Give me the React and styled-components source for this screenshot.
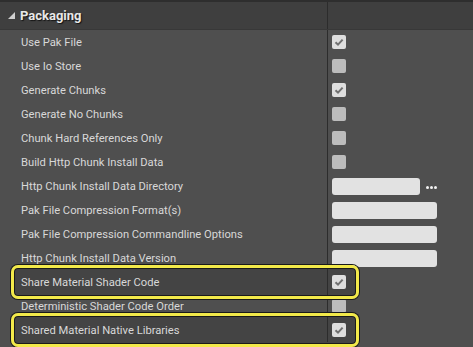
import React from "react";
import styled, { createGlobalStyle } from "styled-components";

const Global = createGlobalStyle`
  html, body {
    margin: 0;
    padding: 0;
    background: #4f4f4f;
    font-family: Roboto, "Liberation Sans", sans-serif;
  }
`;

const rows = [
  { label: "Use Pak File", kind: "check", checked: true },
  { label: "Use Io Store", kind: "check" },
  { label: "Generate Chunks", kind: "check", checked: true },
  { label: "Generate No Chunks", kind: "check" },
  { label: "Chunk Hard References Only", kind: "check" },
  { label: "Build Http Chunk Install Data", kind: "check" },
  { label: "Http Chunk Install Data Directory", kind: "path" },
  { label: "Pak File Compression Format(s)", kind: "text" },
  { label: "Pak File Compression Commandline Options", kind: "text" },
  { label: "Http Chunk Install Data Version", kind: "text" },
  { label: "Share Material Shader Code", kind: "check", checked: true, marked: true },
  { label: "Deterministic Shader Code Order", kind: "check" },
  { label: "Shared Material Native Libraries", kind: "check", checked: true, marked: true },
];

const Panel = styled.div`
  width: 473px;
  height: 347px;
  overflow: hidden;
  background: #4f4f4f;
  border-top: 2px solid #2e2e2e;
  box-sizing: border-box;
`;

const Header = styled.div`
  display: grid;
  grid-template-columns: 328px 1fr;
  height: 28px;
  background: #3f3f3f;
  border-bottom: 1px solid #383838;
  box-sizing: border-box;
`;

const HeaderTitle = styled.div`
  display: flex;
  align-items: center;
  gap: 5px;
  padding-left: 8px;
  border-right: 1px solid #2c2c2c;
  color: #e8e8e8;
  font-size: 13px;
  font-weight: 700;
  text-shadow: 1px 1px 1px #141414;
`;

const Row = styled.div`
  position: relative;
  display: grid;
  grid-template-columns: 328px 1fr;
  height: 24px;

  ${(p) =>
    p.$marked &&
    `
    &::before {
      content: "";
      position: absolute;
      left: 13px;
      top: -2px;
      width: 344px;
      height: 28px;
      background: #444;
      border-radius: 4px;
      z-index: 0;
    }
    &::after {
      content: "";
      position: absolute;
      left: 11px;
      top: -5px;
      width: 342px;
      height: 28px;
      border: 3px solid #f2e94a;
      border-radius: 7px;
      box-shadow: 0 0 0 1px #1a1a1a, inset 0 0 0 1px #1a1a1a;
      pointer-events: none;
      z-index: 2;
    }
  `}
`;

const Name = styled.div`
  position: relative;
  z-index: 1;
  display: flex;
  align-items: center;
  padding-left: 21px;
  border-right: 1px solid #2c2c2c;
  color: #d8d8d8;
  font-size: 11.2px;
  white-space: nowrap;
`;

const Value = styled.div`
  position: relative;
  z-index: 1;
  display: flex;
  align-items: center;
  gap: 6px;
  padding-left: 4px;
`;

const Box = styled.div`
  width: 14px;
  height: 14px;
  border-radius: 2px;
  background: ${(p) => (p.$checked ? "#dedede" : "#bcbcbc")};
  display: flex;
  align-items: center;
  justify-content: center;
`;

const Field = styled.div`
  width: ${(p) => p.$w}px;
  height: 17px;
  border-radius: 3px;
  background: #e2e2e2;
`;

const Dots = styled.div`
  display: flex;
  gap: 1px;
  padding-top: 3px;
  span {
    width: 3px;
    height: 3px;
    border-radius: 50%;
    background: #f2f2f2;
  }
`;

const Check = () => (
  <svg width="10" height="10" viewBox="0 0 10 10">
    <polyline
      points="1.5,5.2 4,7.6 8.6,2.6"
      fill="none"
      stroke="#707070"
      strokeWidth="2"
    />
  </svg>
);

const renderValue = (r) => {
  if (r.kind === "check")
    return <Box $checked={r.checked}>{r.checked && <Check />}</Box>;
  if (r.kind === "path")
    return (
      <>
        <Field $w={88} />
        <Dots>
          <span />
          <span />
          <span />
        </Dots>
      </>
    );
  return <Field $w={105} />;
};

const App = () => (
  <>
    <Global />
    <Panel>
      <Header>
        <HeaderTitle>
          <svg width="7" height="7" viewBox="0 0 7 7">
            <polygon points="7,0 7,7 0,7" fill="#cfcfcf" />
          </svg>
          Packaging
        </HeaderTitle>
        <div />
      </Header>
      {rows.map((r) => (
        <Row key={r.label} $marked={r.marked}>
          <Name>{r.label}</Name>
          <Value>{renderValue(r)}</Value>
        </Row>
      ))}
    </Panel>
  </>
);

export default App;
